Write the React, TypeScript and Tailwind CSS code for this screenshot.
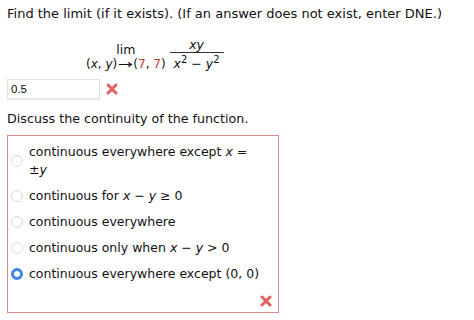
import React from 'react';

const RedX = ({ className = '' }: { className?: string }) => (
  <svg viewBox="0 0 12 12" className={className} width="12" height="12">
    <path d="M2 2 L10 10 M10 2 L2 10" stroke="#e15f5f" strokeWidth="3" strokeLinecap="round" />
  </svg>
);

const Radio = ({ checked = false }: { checked?: boolean }) =>
  checked ? (
    <span className="inline-block w-[12px] h-[12px] rounded-full border-[3.5px] border-[#3f82f0] bg-white shrink-0" />
  ) : (
    <span className="inline-block w-[12px] h-[12px] rounded-full border border-[#dcdcdc] bg-white shrink-0 shadow-[inset_0_1px_1px_rgba(0,0,0,0.06)]" />
  );

const I = ({ children }: { children: React.ReactNode }) => <i className="italic">{children}</i>;

const options: { label: React.ReactNode; checked?: boolean }[] = [
  {
    label: (
      <>
        continuous everywhere except <I>x</I> =<br />±<I>y</I>
      </>
    ),
  },
  {
    label: (
      <>
        continuous for <I>x</I> − <I>y</I> ≥ 0
      </>
    ),
  },
  { label: <>continuous everywhere</> },
  {
    label: (
      <>
        continuous only when <I>x</I> − <I>y</I> &gt; 0
      </>
    ),
  },
  { label: <>continuous everywhere except (0, 0)</>, checked: true },
];

export default function App() {
  return (
    <div className="w-[474px] h-[320px] bg-white text-[#111] pt-[5px] pl-[7px] font-['DejaVu_Sans',Verdana,sans-serif] text-[12.5px] leading-[18px] overflow-hidden">
      <p className="text-[13px]">Find the limit (if it exists). (If an answer does not exist, enter DNE.)</p>

      <div className="flex items-end ml-[79px] mt-[14px]">
        <div className="flex flex-col items-center mr-[4px] mb-[1px]">
          <span className="text-[12.5px] leading-[15px]">lim</span>
          <span className="text-[12px] leading-[14px]">
            (<I>x</I>, <I>y</I>)<span className="inline-block scale-x-150 mx-[3px]">→</span>(<span className="text-[#c0392b]">7</span>, <span className="text-[#c0392b]">7</span>)
          </span>
        </div>
        <div className="flex flex-col items-center">
          <span className="text-[12.5px] leading-[15px] px-[2px]">
            <I>xy</I>
          </span>
          <span className="h-px w-[54px] bg-[#333]" />
          <span className="text-[12.5px] leading-[17px] px-[2px] pt-[2px]">
            <I>x</I>
            <sup className="text-[10px]">2</sup> − <I>y</I>
            <sup className="text-[10px]">2</sup>
          </span>
        </div>
      </div>

      <div className="flex items-center mt-[7px]">
        <div className="w-[93px] h-[20px] border border-[#e2e2e2] shadow-[0_1px_1px_rgba(0,0,0,0.08)] pl-[3px] flex items-center text-[11.5px] font-['Liberation_Sans',Arial,sans-serif]">
          0.5
        </div>
        <RedX className="ml-[6px]" />
      </div>

      <p className="mt-[11px] text-[12.7px]">Discuss the continuity of the function.</p>

      <div className="mt-[7px] w-[272px] h-[178px] border border-[#d98a88] flex flex-col pt-[7px] pl-[3px] pr-[6px]">
        <div className="flex flex-col gap-[8px]">
          {options.map((o, i) => (
            <div key={i} className="flex items-center gap-[6px]">
              <Radio checked={o.checked} />
              <span>{o.label}</span>
            </div>
          ))}
        </div>
        <div className="flex justify-end mt-auto mb-[5px]">
          <RedX />
        </div>
      </div>
    </div>
  );
}
